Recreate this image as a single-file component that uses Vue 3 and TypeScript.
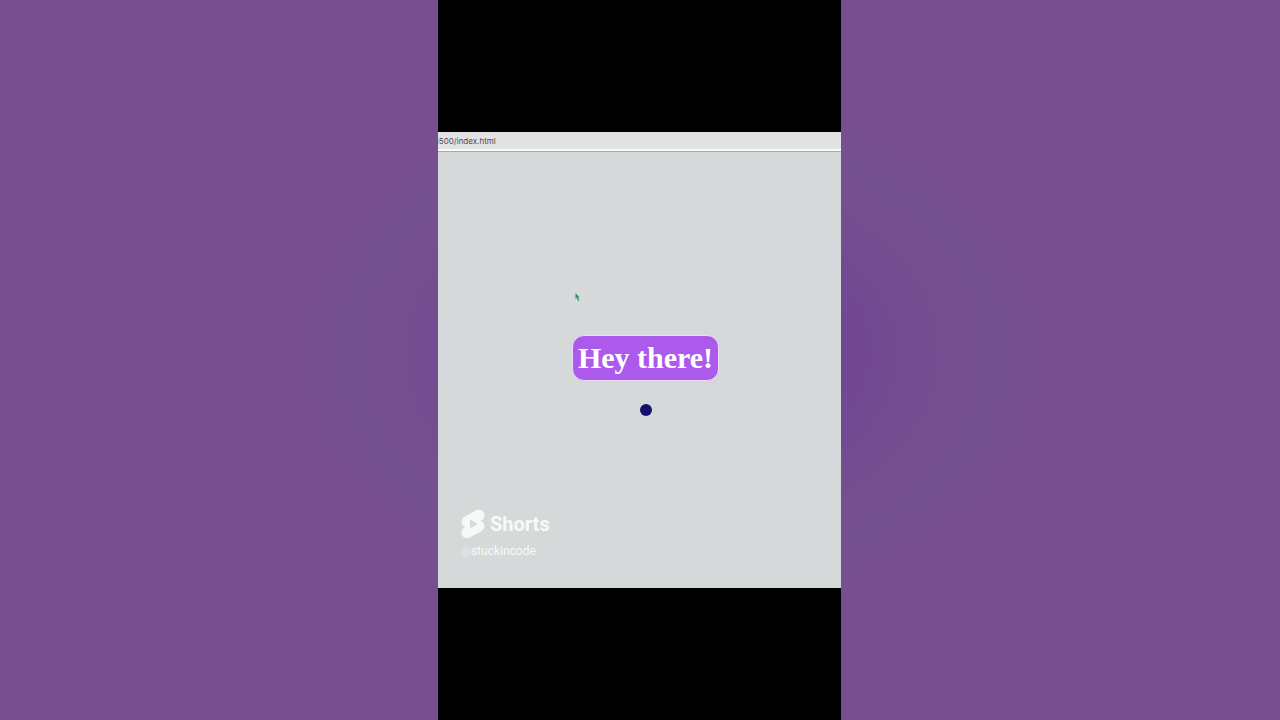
<script setup lang="ts">
const address: string = '5500/index.html'
const greeting: string = 'Hey there!'
const handle: string = 'stuckincode'
</script>

<template>
  <div class="stage">
    <main class="short">
      <section class="browser">
        <header class="address-bar"><span class="address">{{ address }}</span></header>
        <div class="canvas">
          <h1 class="greeting">{{ greeting }}</h1>
          <span class="dot"></span>
        </div>
        <svg class="pointer" viewBox="0 0 6 10" aria-hidden="true">
          <path d="M.5 1v6l1.400-1.200L3.100 9l1.200-.6L3.100 5.400h1.500z" fill="#2b9568" />
        </svg>
        <div class="watermark">
          <div class="brand">
            <svg class="logo" viewBox="0 0 24 30" aria-hidden="true">
              <path
                d="M15.400 1.300 4.600 7C1.800 8.500.4 10.800.6 13.400.8 15.500 2 17.200 4 18L4.600 18.200 3.500 18.800C.7 20.300-.3 23.500 1.100 26.200 2.600 29 6 29.900 8.700 28.500L19.500 22.800C22.200 21.400 23.700 19 23.500 16.400 23.300 14.300 22 12.700 20 11.900L19.500 11.700 20.500 11.100C23.300 9.600 24.300 6.400 22.900 3.700 21.500.9 18.100-.1 15.400 1.300Z"
                fill="#f7f9f9"
              />
              <path d="M9 10.200v9.400l7.800-4.700z" fill="#d5d9da" />
            </svg>
            <span class="brand-name">Shorts</span>
          </div>
          <p class="handle"><span class="at">@</span>{{ handle }}</p>
        </div>
      </section>
    </main>
  </div>
</template>

<style>
body {
  margin: 0;
}
</style>

<style scoped>
.stage {
  display: grid;
  grid-template-columns: 438fr 403fr 439fr;
  min-height: 100vh;
  background: radial-gradient(
    ellipse 28% 34% at 52.5% 49%,
    #6e4690 0%,
    #714791 47%,
    #744c91 66%,
    #764f90 82%,
    #735191 90%,
    #774f8f 100%
  );
  background-color: #774f8f;
}

.short {
  grid-column: 2;
  display: grid;
  grid-template-rows: 132fr auto 132fr;
  background: #000;
}

.browser {
  grid-row: 2;
  position: relative;
  display: flex;
  flex-direction: column;
  min-height: 456px;
  background: #d5d9da;
  overflow: hidden;
}

.address-bar {
  display: flex;
  align-items: center;
  height: 17px;
  background: #e2e2e2;
  border-bottom: 2px solid #fafafa;
  box-shadow: 0 1px 0 #a9abad;
}

.address {
  margin-left: -4px;
  font: 8px/16px Inter, "Liberation Sans", Arial, sans-serif;
  color: #4b4b4b;
}

.canvas {
  flex: 1;
  display: flex;
  flex-direction: column;
  align-items: center;
  justify-content: center;
  gap: 23px;
  padding: 12px 0 0 12px;
}

.greeting {
  margin: 0;
  padding: 5px;
  border: 1px solid #ecdcf8;
  border-radius: 12px;
  background: #ac5aec;
  color: #fff;
  font: bold 30px/34px "Liberation Serif", "Times New Roman", serif;
}

.dot {
  width: 12px;
  height: 12px;
  border-radius: 50%;
  background: #15106b;
}

.pointer {
  position: absolute;
  left: 34%;
  top: 35%;
  width: 6px;
  height: 10px;
}

.watermark {
  position: absolute;
  left: 23px;
  bottom: 28px;
  color: #f7f9f9;
}

.brand {
  display: flex;
  align-items: center;
  gap: 5px;
}

.logo {
  width: 24px;
  height: 30px;
}

.brand-name {
  font: bold 20px/30px Roboto, "Liberation Sans", sans-serif;
}

.handle {
  margin: 4px 0 0;
  font: 400 12px/16px Roboto, sans-serif;
}

.at {
  font-size: 11px;
  opacity: 0.5;
}
</style>
